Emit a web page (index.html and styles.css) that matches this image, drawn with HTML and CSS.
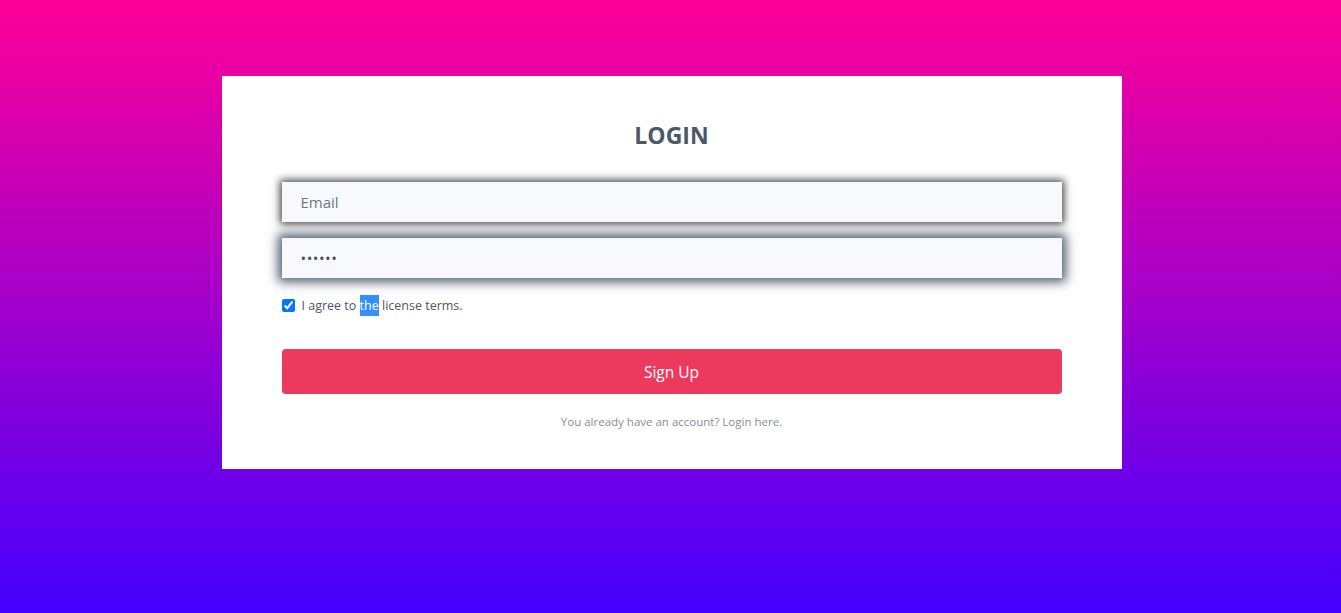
FILE: index.html
```html
<!DOCTYPE html>
<html lang="en">
<head>
    <meta charset="UTF-8">
    <meta name="viewport" content="width=device-width, initial-scale=1.0">
    <title>Login</title>
    <link rel="stylesheet" href="styles.css">
</head>
<body>
    <div class="page">
        <form class="card">
            <h2 class="title">LOGIN</h2>
            <input class="field field-email" type="email" placeholder="Email">
            <input class="field field-pass" type="password" value="123456">
            <label class="agree">
                <input type="checkbox" checked>
                <span>I agree to <span class="sel">the</span> license terms.</span>
            </label>
            <button type="button" class="btn">Sign Up</button>
            <p class="note">You already have an account? Login here.</p>
        </form>
    </div>
</body>
</html>
```

FILE: styles.css
```css
html, body {
    margin: 0;
    padding: 0;
    height: 100%;
}
body {
    font-family: "Open Sans", "Noto Sans", sans-serif;
    background: linear-gradient(to bottom, #ff0097, #4400ff);
}
.page {
    padding: 76px 0 0 2px;
    display: flex;
    justify-content: center;
}
.card {
    width: 900px;
    box-sizing: border-box;
    background: #fff;
    padding: 43px 60px 40px;
    display: flex;
    flex-direction: column;
}
.title {
    margin: 0 0 31px;
    text-align: center;
    font-size: 23px;
    line-height: 32px;
    color: #4b5868;
    font-weight: 700;
}
.field {
    height: 40px;
    box-sizing: border-box;
    border: none;
    background: #f7f9fc;
    padding: 0 19px;
    font-family: inherit;
    font-size: 15px;
    color: #495057;
    outline: none;
}
.field::placeholder {
    color: #6c7a89;
}
.field-email {
    box-shadow: 0 0 8px 2px rgba(0, 0, 0, 0.75);
    margin-bottom: 16px;
}
.field-pass {
    box-shadow: 0 0 10px 4px rgba(70, 86, 104, 0.95);
    font-size: 15px;
    letter-spacing: 0.5px;
}
.agree {
    display: flex;
    align-items: center;
    margin-top: 19px;
    font-size: 12.5px;
    color: #4b5868;
}
.agree input {
    margin: 0 7px 0 0;
    width: 13px;
    height: 13px;
}
.sel {
    background: #3390ff;
    color: #fff;
    padding: 2px 0;
}
.btn {
    margin-top: 35px;
    height: 45px;
    border: none;
    border-radius: 4px;
    background: #ec3a5e;
    color: #fff;
    font-family: inherit;
    font-size: 15.5px;
}
.note {
    margin: 20px 0 0;
    text-align: center;
    font-size: 11.5px;
    color: #868e96;
}
```
